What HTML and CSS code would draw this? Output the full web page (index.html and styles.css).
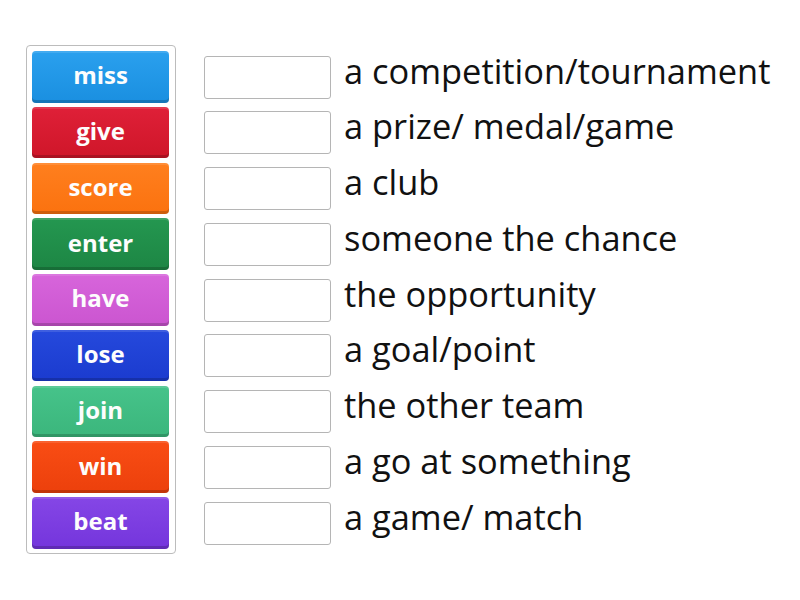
FILE: index.html
```html
<!DOCTYPE html>
<html>
<head>
<meta charset="utf-8">
<link rel="stylesheet" href="styles.css">
</head>
<body>
<div class="page">
  <div class="bank">
    <div class="tile c1">miss</div>
    <div class="tile c2">give</div>
    <div class="tile c3">score</div>
    <div class="tile c4">enter</div>
    <div class="tile c5">have</div>
    <div class="tile c6">lose</div>
    <div class="tile c7">join</div>
    <div class="tile c8">win</div>
    <div class="tile c9">beat</div>
  </div>
  <div class="rows">
    <div class="row"><div class="slot"></div><div class="label">a competition/tournament</div></div>
    <div class="row"><div class="slot"></div><div class="label">a prize/ medal/game</div></div>
    <div class="row"><div class="slot"></div><div class="label">a club</div></div>
    <div class="row"><div class="slot"></div><div class="label">someone the chance</div></div>
    <div class="row"><div class="slot"></div><div class="label">the opportunity</div></div>
    <div class="row"><div class="slot"></div><div class="label">a goal/point</div></div>
    <div class="row"><div class="slot"></div><div class="label">the other team</div></div>
    <div class="row"><div class="slot"></div><div class="label">a go at something</div></div>
    <div class="row"><div class="slot"></div><div class="label">a game/ match</div></div>
  </div>
</div>
</body>
</html>
```
FILE: styles.css
```css
html, body {
  margin: 0;
  padding: 0;
  background: #fff;
}
body {
  font-family: "Open Sans", "Liberation Sans", sans-serif;
  width: 800px;
  height: 600px;
  overflow: hidden;
}
.page {
  display: flex;
  align-items: flex-start;
  padding: 45px 0 0 26px;
}
.bank {
  border: 1px solid #bcbcbc;
  border-radius: 4px;
  padding: 5px 6px 4px 5px;
  display: flex;
  flex-direction: column;
  gap: 4.25px;
}
.tile {
  width: 137px;
  height: 51.5px;
  box-sizing: border-box;
  border-radius: 4px;
  color: #fdfdfd;
  font-weight: 700;
  font-size: 24px;
  display: flex;
  align-items: center;
  justify-content: center;
  padding-bottom: 4px;
  box-shadow: inset 0 -3px 0 rgba(0,0,0,0.18), inset 0 2px 0 rgba(255,255,255,0.12);
}
.c1 { background: linear-gradient(#2aa0ee, #1a8fe0); }
.c2 { background: linear-gradient(#df2038, #cf1629); }
.c3 { background: linear-gradient(#ff7f1e, #fb720f); }
.c4 { background: linear-gradient(#249750, #1d8644); }
.c5 { background: linear-gradient(#d765db, #cb55d0); }
.c6 { background: linear-gradient(#2549dc, #1b3bcf); }
.c7 { background: linear-gradient(#46c38a, #3bb67c); }
.c8 { background: linear-gradient(#f94d14, #ec400c); }
.c9 { background: linear-gradient(#8546e6, #7435dc); }
.rows {
  display: flex;
  flex-direction: column;
  gap: 12.75px;
  padding: 10.7px 0 0 28px;
}
.row {
  display: flex;
  align-items: flex-start;
  height: 43px;
}
.slot {
  width: 127px;
  height: 43px;
  box-sizing: border-box;
  border: 1px solid #b5b5b5;
  border-radius: 3px;
  background: #fff;
  flex: none;
}
.label {
  margin-left: 13px;
  font-size: 34.4px;
  line-height: 30px;
  color: #111;
  white-space: nowrap;
}
```
